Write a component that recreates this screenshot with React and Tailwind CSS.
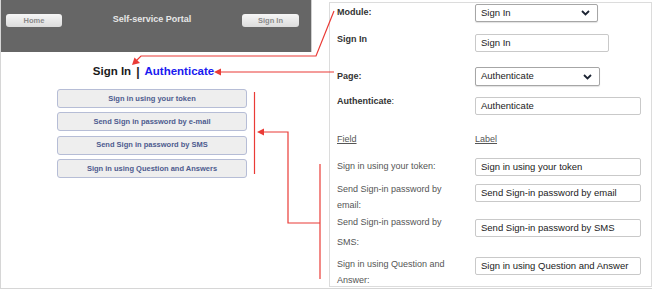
import React from "react";

const font = { fontFamily: '"Liberation Sans", Arial, sans-serif' };

function Chevron() {
  return (
    <svg width="9" height="6" viewBox="0 0 9 6" className="shrink-0">
      <polyline points="1,1 4.5,4.5 8,1" fill="none" stroke="#1c2433" strokeWidth="1.8" />
    </svg>
  );
}

function Select({ value, w }) {
  return (
    <div
      className={`h-full ${w} flex items-center justify-between pl-[5px] pr-[7px] border border-[#a6a6a6] rounded-[2px] bg-white shadow-[0_1px_1px_rgba(0,0,0,0.12)] text-[9.5px] text-[#222]`}
    >
      <span>{value}</span>
      <Chevron />
    </div>
  );
}

function Input({ value, w }) {
  return (
    <div
      className={`h-[18px] ${w} flex items-center pl-[5px] border border-[#c9c9c9] rounded-[2px] bg-white text-[9.5px] text-[#222]`}
    >
      {value}
    </div>
  );
}

function PortalButton({ children }) {
  return (
    <div className="h-[19px] w-[190px] flex items-center justify-center rounded-[3px] border-[1.5px] border-[#b6bdd6] bg-[#eeeeee] text-[7.5px] font-bold text-[#4d5b8e]">
      {children}
    </div>
  );
}

function HeaderButton({ children, w }) {
  return (
    <div
      className={`h-[13px] ${w} flex items-center justify-center rounded-[3px] bg-gradient-to-b from-[#f6f6f6] to-[#dcdcdc] text-[7.5px] font-bold text-[#8a8a8a]`}
    >
      {children}
    </div>
  );
}

export default function App() {
  return (
    <div
      className="relative w-[652px] h-[289px] bg-white overflow-hidden flex border-l border-b border-[#d6d6d6]"
      style={font}
    >
      {/* Left: portal preview */}
      <div className="w-[328px] shrink-0 flex flex-col">
        <div className="w-[311px] h-[52px] bg-[#666666] border-r border-[#cfcfcf] flex items-start justify-between pt-[14px] pl-[5px] pr-[12px]">
          <HeaderButton w="w-[56px]">Home</HeaderButton>
          <div className="text-[9px] font-bold text-[#e6e6e6] leading-[12px] -mt-[1px]">Self-service Portal</div>
          <HeaderButton w="w-[57px]">Sign In</HeaderButton>
        </div>
        <div className="w-[305px] flex justify-center items-center mt-[13px] h-[14px] text-[11.5px] font-bold">
          <span className="text-[#1a1a1a]">Sign In</span>
          <span className="mx-[5px] font-bold text-[#222] text-[12px]">|</span>
          <span className="text-[#1a1af0]">Authenticate</span>
        </div>
        <div className="flex flex-col gap-[4.3px] pl-[56px] mt-[10px]">
          <PortalButton>Sign in using your token</PortalButton>
          <PortalButton>Send Sign in password by e-mail</PortalButton>
          <PortalButton>Send Sign in password by SMS</PortalButton>
          <PortalButton>Sign in using Question and Answers</PortalButton>
        </div>
      </div>

      {/* Right: configuration panel */}
      <div className="w-[323px] h-[285px] mt-[2px] border border-[#dcdcdc] pl-[7px] flex flex-col text-[9px] text-[#555]">
        <div className="mt-[1px] h-[18px] flex items-center">
          <div className="w-[138px] font-bold text-[#333]">Module:</div>
          <Select value="Sign In" w="w-[123px]" />
        </div>
        <div className="mt-[11px] h-[19px] flex items-start">
          <div className="w-[138px] font-bold text-[#333] leading-[12px]">Sign In</div>
          <div className="mt-[1px]"><Input value="Sign In" w="w-[134px]" /></div>
        </div>
        <div className="mt-[15px] h-[19px] flex items-center">
          <div className="w-[138px] font-bold text-[#333]">Page:</div>
          <Select value="Authenticate" w="w-[125px]" />
        </div>
        <div className="mt-[9px] h-[20px] flex items-start">
          <div className="w-[138px] leading-[12px] text-[#333]">
            <span className="font-bold">Authenticate</span>:
          </div>
          <div className="mt-[2px]"><Input value="Authenticate" w="w-[166px]" /></div>
        </div>
        <div className="mt-[18px] h-[12px] flex items-start leading-[12px]">
          <div className="w-[138px] underline">Field</div>
          <div className="underline">Label</div>
        </div>
        <div className="mt-[13px] h-[18px] flex items-center">
          <div className="w-[138px]">Sign in using your token:</div>
          <Input value="Sign in using your token" w="w-[166px]" />
        </div>
        <div className="mt-[7px] h-[19px] flex items-start">
          <div className="w-[138px] leading-[16px] -mt-[2px]">Send Sign-in password by<br />email:</div>
          <div className="mt-[1px]"><Input value="Send Sign-in password by email" w="w-[166px]" /></div>
        </div>
        <div className="mt-[10px] h-[25px] flex items-start">
          <div className="w-[138px] leading-[20px]">Send Sign-in password by<br />SMS:</div>
          <div className="mt-[7px]"><Input value="Send Sign-in password by SMS" w="w-[166px]" /></div>
        </div>
        <div className="mt-[19px] h-[19px] flex items-start">
          <div className="w-[138px] leading-[16px]">Sign in using Question and<br />Answer:</div>
          <div className="mt-[1px]"><Input value="Sign in using Question and Answer" w="w-[166px]" /></div>
        </div>
      </div>

      {/* Annotation arrows */}
      <svg
        className="absolute left-0 top-0 pointer-events-none"
        width="652"
        height="289"
        viewBox="0 0 652 289"
      >
        <g fill="none" stroke="#ea3b36" strokeWidth="1.2">
          <polyline points="333,11 315,56 140,56 135,61" />
          <line x1="333" y1="72" x2="219" y2="72" />
          <line x1="253.5" y1="92" x2="253.5" y2="174" />
          <polyline points="319,223 287,223 287,132 261,132" />
          <line x1="319" y1="164" x2="319" y2="279" />
        </g>
        <g fill="#ea3b36">
          <polygon points="131,65 133.5,57.5 139,63" />
          <polygon points="213,72 220,68.5 220,75.5" />
          <polygon points="256,132 263,128.5 263,135.5" />
        </g>
      </svg>
    </div>
  );
}
